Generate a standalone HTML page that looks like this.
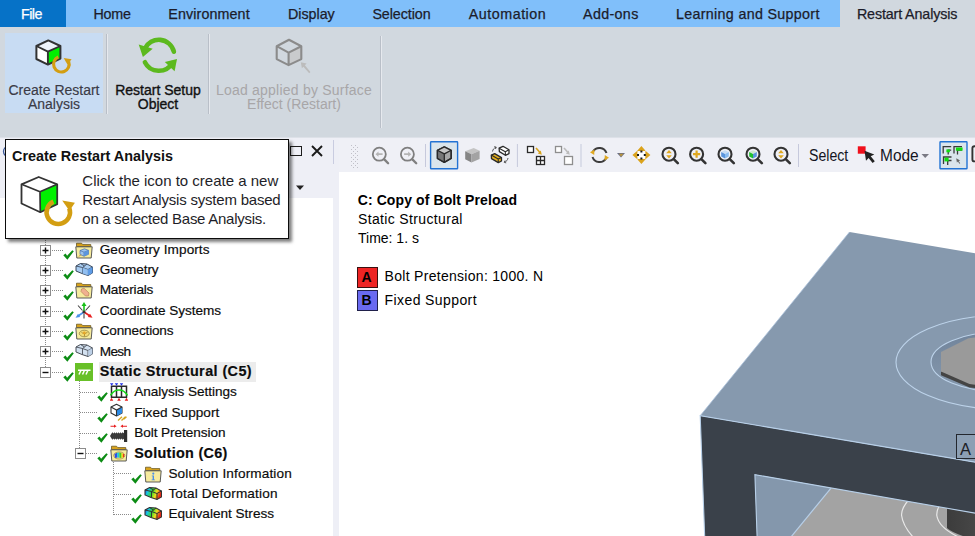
<!DOCTYPE html>
<html>
<head>
<meta charset="utf-8">
<title>Mechanical - Restart Analysis</title>
<style>
html,body{margin:0;padding:0;}
body{width:975px;height:536px;overflow:hidden;position:relative;background:#eeeff6;font-family:"Liberation Sans",sans-serif;color:#1a1a1a;}
.abs{position:absolute;}
.t{position:absolute;white-space:nowrap;line-height:1;}
/* tab bar */
#tabbar{left:0;top:0;width:975px;height:27px;background:#80bffa;}
#filetab{left:0;top:0;width:66px;height:27px;background:#0672c7;}
#acttab{left:840px;top:0;width:135px;height:27px;background:#d1d8df;}
.tab{font-size:14.3px;top:7px;color:#1c1c2a;letter-spacing:0.17px;-webkit-text-stroke:0.25px #1c1c2a;}
/* ribbon */
#ribbon{left:0;top:27px;width:975px;height:110px;background:#d1d8df;}
#ribbonline{left:0;top:137px;width:975px;height:1px;background:#dde1e8;}
.rb{font-size:14px;color:#1a1a1a;text-align:center;}
.vsep{position:absolute;width:1px;background:#b9bfc8;}
.vsepw{position:absolute;width:1px;background:#e6e9ee;}
/* tree */
.tr{font-family:"Liberation Sans",sans-serif;font-size:13.6px;color:#0c0c0c;letter-spacing:0.1px;-webkit-text-stroke:0.18px #0c0c0c;}
.vp{font-size:14px;color:#000;}
</style>
</head>
<body>

<!-- ======= TAB BAR ======= -->
<div id="tabbar" class="abs"></div>
<div id="filetab" class="abs"></div>
<div id="acttab" class="abs"></div>
<div class="t tab" style="left:21px;color:#fff;-webkit-text-stroke:0.25px #fff;letter-spacing:-0.55px;">File</div>
<div class="t tab" style="left:93.5px;letter-spacing:-0.21px;">Home</div>
<div class="t tab" style="left:168.3px;letter-spacing:0.11px;">Environment</div>
<div class="t tab" style="left:288px;letter-spacing:-0.03px;">Display</div>
<div class="t tab" style="left:372.4px;letter-spacing:-0.07px;">Selection</div>
<div class="t tab" style="left:468.8px;letter-spacing:0.51px;">Automation</div>
<div class="t tab" style="left:583px;letter-spacing:0.34px;">Add-ons</div>
<div class="t tab" style="left:676px;letter-spacing:0.31px;">Learning and Support</div>
<div class="t tab" style="left:856.9px;letter-spacing:-0.13px;">Restart Analysis</div>

<!-- ======= RIBBON ======= -->
<div id="ribbon" class="abs"></div>
<div id="ribbonline" class="abs"></div>
<div class="abs" style="left:5px;top:33px;width:98px;height:80px;background:#c8dcf3;"></div>
<div class="vsep" style="left:106px;top:34px;height:80px;"></div><div class="vsepw" style="left:107px;top:34px;height:80px;"></div>
<div class="vsep" style="left:208px;top:34px;height:80px;"></div><div class="vsepw" style="left:209px;top:34px;height:80px;"></div>
<div class="vsep" style="left:380px;top:36px;height:92px;"></div><div class="vsepw" style="left:381px;top:36px;height:92px;"></div>

<div class="t rb" style="left:5px;width:98px;top:83.4px;color:#3b3b46;-webkit-text-stroke:0.15px #3b3b46;">Create Restart</div>
<div class="t rb" style="left:5px;width:98px;top:97.4px;color:#3b3b46;-webkit-text-stroke:0.15px #3b3b46;">Analysis</div>
<div class="t rb" style="left:108px;width:100px;top:83.4px;color:#111;-webkit-text-stroke:0.35px #111;">Restart Setup</div>
<div class="t rb" style="left:108px;width:100px;top:97.4px;color:#111;-webkit-text-stroke:0.35px #111;">Object</div>
<div class="t rb" style="left:210px;width:168px;top:83.4px;color:#a8a6a8;letter-spacing:0.22px;">Load applied by Surface</div>
<div class="t rb" style="left:210px;width:168px;top:97.4px;color:#a8a6a8;">Effect (Restart)</div>

<!-- ribbon icons -->
<svg class="abs" style="left:25px;top:32px;" width="60" height="50" viewBox="0 0 60 50">
  <path d="M23.3 8.400 L35.400 14 L35.400 26.600 L22.900 32.600 L11.400 27 L11.400 14 Z" fill="#fff"/>
  <path d="M23.3 8.400 L35.400 14 L22.900 19.600 L11.400 14 Z" fill="#eef3fa"/>
  <path d="M22.900 19.600 L35.400 14 L35.400 26.600 L22.900 32.600 Z" fill="#00f000"/>
  <path d="M11.400 14 L22.900 19.600 L35.400 14 M22.900 19.600 L22.900 32.600" fill="none" stroke="#333" stroke-width="1.900" stroke-linejoin="round"/>
  <path d="M23.3 8.400 L35.400 14 L35.400 26.600 L22.900 32.600 L11.400 27 L11.400 14 Z" fill="none" stroke="#333" stroke-width="2" stroke-linejoin="round"/>
  <path d="M33.350 25 A7.800 7.800 0 1 0 43.700 29.500" fill="none" stroke="#d39e12" stroke-width="3.100"/>
  <path d="M38.700 26.100 L46.600 27.200 L42.400 32.600 Z" fill="#d39e12"/>
</svg>
<svg class="abs" style="left:128px;top:32px;" width="60" height="50" viewBox="0 0 60 50">
  <path d="M45.900 19.700 A15.500 15.500 0 0 0 16.750 16.750" fill="none" stroke="#5cb91e" stroke-width="4.600" stroke-linecap="round"/>
  <path d="M10.700 12.600 L24.700 16.800 L14.900 25 Z" fill="#5cb91e"/>
  <path d="M16.900 30.200 A15.500 15.500 0 0 0 44.200 31.050" fill="none" stroke="#5cb91e" stroke-width="4.600" stroke-linecap="round"/>
  <path d="M36.800 29.900 L49 27.100 L46.600 39.200 Z" fill="#5cb91e"/>
</svg>
<svg class="abs" style="left:265px;top:30px;" width="60" height="50" viewBox="265 30 60 50">
  <path d="M288.600 52.600 L301.300 46.200 L301.300 59.100 L288.600 65.100 Z" fill="#c9cbcd"/>
  <path d="M289 39.700 L301.300 46.200 L301.300 59.100 L288.600 65.100 L276.700 59.100 L276.700 46.200 Z M276.700 46.200 L288.600 52.600 L301.300 46.200 M288.600 52.600 L288.600 65.100" fill="none" stroke="#8b8b8b" stroke-width="2.100" stroke-linejoin="round"/>
  <path d="M300.800 62.300 L306.600 63.600 L304.900 65.300 L310.400 72 L309.200 73.200 L303.400 66.700 L301.900 68.200 Z" fill="#bcbcbc"/>
</svg>

<!-- ======= LEFT PANEL ======= -->
<div class="abs" style="left:0;top:139px;width:339px;height:397px;background:#eeeff6;"></div>
<div class="abs" style="left:0;top:198px;width:333px;height:338px;background:#fff;"></div>
<!-- panel header icons -->
<div class="abs" style="left:290px;top:145.8px;width:9.8px;height:8.6px;border:1.6px solid #1c1c1c;box-sizing:content-box;"></div>
<svg class="abs" style="left:310px;top:143.7px;" width="14" height="14" viewBox="0 0 14 14"><path d="M2 2 L12 12 M12 2 L2 12" stroke="#1a1a1a" stroke-width="1.9" fill="none"/></svg>
<div class="abs" style="left:333px;top:140px;width:1px;height:24px;background:#c9cce0;"></div>
<svg class="abs" style="left:294px;top:184px;" width="12" height="8" viewBox="0 0 12 8"><path d="M2 1.5 L10 1.5 L6 6 Z" fill="#222"/></svg>

<!--TREE-->
<svg class="abs" style="left:0;top:0;" width="340" height="536" viewBox="0 0 340 536" shape-rendering="crispEdges"><g stroke="#8a8a8a" stroke-width="1" stroke-dasharray="1 1" fill="none"><path d="M45.5 238 L45.5 366.7"/><path d="M79.5 380.7 L79.5 448.1"/><path d="M113.5 462.1 L113.5 514.6"/><path d="M52 250.5 L63 250.5"/><path d="M52 270.5 L63 270.5"/><path d="M52 290.5 L63 290.5"/><path d="M52 311.5 L63 311.5"/><path d="M52 331.5 L63 331.5"/><path d="M52 351.5 L63 351.5"/><path d="M52 372.5 L63 372.5"/><path d="M79.5 392.5 L97 392.5"/><path d="M79.5 412.5 L97 412.5"/><path d="M79.5 433.5 L97 433.5"/><path d="M86 453.5 L97 453.5"/><path d="M113.5 473.5 L131 473.5"/><path d="M113.5 494.5 L131 494.5"/><path d="M113.5 514.5 L131 514.5"/></g></svg>
<svg class="abs" style="left:40px;top:245px;" width="11" height="11" viewBox="0 0 11 11"><rect x="0.5" y="0.5" width="10" height="10" fill="#fff" stroke="#8c8c8c"/><path d="M2.5 5.5 L8.5 5.5 M5.5 2.5 L5.5 8.5" stroke="#111" stroke-width="1.400"/></svg>
<svg class="abs" style="left:63.2px;top:249.9px;" width="11" height="10" viewBox="0 0 11 10"><path d="M0.300 5.300 L2.600 3.500 L4.100 5.800 L9.300 0.200 L10.800 1.200 L4.400 9.800 Z" fill="#0c8c14"/></svg>
<svg class="abs" style="left:74.6px;top:240.6px;" width="18" height="18" viewBox="0 0 18 18"><path d="M1.5 5.5 L1.5 2.2 L6.5 2.2 L7.8 3.6 L15.8 3.6 L15.8 5.5 Z" fill="#d9a31c" stroke="#5a4a1a" stroke-width="0.7"/>
<path d="M0.8 5.8 L17.2 5.8 L16.2 17 L1.8 17 Z" fill="#f6eb9e" stroke="#4a4a4a" stroke-width="0.9"/><path d="M5 9.5 L9.5 7.8 L13.5 9.3 L13.5 13.3 L9 15.2 L5 13.6 Z" fill="#9cc3ee" stroke="#4a6fa8" stroke-width="0.7"/><path d="M5 9.5 L9 11.2 L13.5 9.3 M9 11.2 L9 15.2" stroke="#4a6fa8" stroke-width="0.7" fill="none"/><path d="M9 11.2 L13.5 9.3 L13.5 13.3 L9 15.2Z" fill="#5b95dd"/><path d="M4 15.5 L6 13.5" stroke="#c58a1a" stroke-width="1"/></svg>
<div class="t tr" style="left:99.7px;top:242.7px;letter-spacing:0.07px;">Geometry Imports</div>
<svg class="abs" style="left:40px;top:265px;" width="11" height="11" viewBox="0 0 11 11"><rect x="0.5" y="0.5" width="10" height="10" fill="#fff" stroke="#8c8c8c"/><path d="M2.5 5.5 L8.5 5.5 M5.5 2.5 L5.5 8.5" stroke="#111" stroke-width="1.400"/></svg>
<svg class="abs" style="left:63.2px;top:270.2px;" width="11" height="10" viewBox="0 0 11 10"><path d="M0.300 5.300 L2.600 3.500 L4.100 5.800 L9.300 0.200 L10.800 1.200 L4.400 9.800 Z" fill="#0c8c14"/></svg>
<svg class="abs" style="left:74.6px;top:260.9px;" width="18" height="18" viewBox="0 0 18 18"><path d="M1 5 L5.5 2.5 L12 3 L17.5 6 L17.5 12 L13 14.5 L7 12.5 L1 10 Z" fill="#a9cdf2" stroke="#3d4a5c" stroke-width="1"/>
<path d="M7.5 6.5 L13 8.5 L17.5 6 M13 8.5 L13 14.5 M1 5 L7.5 6.5 L7.5 12.5 M5.5 2.500 L9.500 5 M7.5 6.5 L12 3" stroke="#3d4a5c" stroke-width="0.9" fill="none"/>
<path d="M13 8.5 L17.5 6 L17.5 12 L13 14.5 Z" fill="#5d9be6"/><path d="M7.5 6.5 L13 8.5 L13 14.5 L7.5 12.5Z" fill="#8bbcf0" opacity="0.8"/></svg>
<div class="t tr" style="left:99.7px;top:263.1px;letter-spacing:-0.11px;">Geometry</div>
<svg class="abs" style="left:40px;top:285px;" width="11" height="11" viewBox="0 0 11 11"><rect x="0.5" y="0.5" width="10" height="10" fill="#fff" stroke="#8c8c8c"/><path d="M2.5 5.5 L8.5 5.5 M5.5 2.5 L5.5 8.5" stroke="#111" stroke-width="1.400"/></svg>
<svg class="abs" style="left:63.2px;top:290.6px;" width="11" height="10" viewBox="0 0 11 10"><path d="M0.300 5.300 L2.600 3.500 L4.100 5.800 L9.300 0.200 L10.800 1.200 L4.400 9.800 Z" fill="#0c8c14"/></svg>
<svg class="abs" style="left:74.6px;top:281.3px;" width="18" height="18" viewBox="0 0 18 18"><path d="M1.5 5.5 L1.5 2.2 L6.5 2.2 L7.8 3.6 L15.8 3.6 L15.8 5.5 Z" fill="#d9a31c" stroke="#5a4a1a" stroke-width="0.7"/>
<path d="M0.8 5.8 L17.2 5.8 L16.2 17 L1.8 17 Z" fill="#f6eb9e" stroke="#4a4a4a" stroke-width="0.9"/><path d="M6.5 8 L9 7.2 L14 12 L13.5 15 L10.5 15 L6 10.5 Z" fill="#f0b090" stroke="#b07a50" stroke-width="0.6"/></svg>
<div class="t tr" style="left:99.7px;top:283.4px;letter-spacing:-0.18px;">Materials</div>
<svg class="abs" style="left:40px;top:306px;" width="11" height="11" viewBox="0 0 11 11"><rect x="0.5" y="0.5" width="10" height="10" fill="#fff" stroke="#8c8c8c"/><path d="M2.5 5.5 L8.5 5.5 M5.5 2.5 L5.5 8.5" stroke="#111" stroke-width="1.400"/></svg>
<svg class="abs" style="left:63.2px;top:310.9px;" width="11" height="10" viewBox="0 0 11 10"><path d="M0.300 5.300 L2.600 3.500 L4.100 5.800 L9.300 0.200 L10.800 1.200 L4.400 9.800 Z" fill="#0c8c14"/></svg>
<svg class="abs" style="left:74.6px;top:301.6px;" width="18" height="18" viewBox="0 0 18 18"><path d="M9 10 L9 2" stroke="#18c018" stroke-width="1.6"/><path d="M9 0 L11.5 4 L6.5 4 Z" fill="#18c018"/>
<path d="M9 10 L15 14" stroke="#e82020" stroke-width="1.6"/><path d="M17.5 15.8 L12.8 15 L15 11.8 Z" fill="#e82020"/>
<path d="M9 10 L3 14" stroke="#4a90e8" stroke-width="1.6"/><path d="M0.5 15.8 L5.200 15 L3 11.800 Z" fill="#4a90e8"/>
<path d="M3 3.500 L7.5 8.500 M15 3.500 L10.5 8.500 M9 12 L9 16.500" stroke="#444" stroke-width="1.1"/><circle cx="9" cy="10" r="1.6" fill="#333"/></svg>
<div class="t tr" style="left:99.7px;top:303.8px;letter-spacing:-0.06px;">Coordinate Systems</div>
<svg class="abs" style="left:40px;top:326px;" width="11" height="11" viewBox="0 0 11 11"><rect x="0.5" y="0.5" width="10" height="10" fill="#fff" stroke="#8c8c8c"/><path d="M2.5 5.5 L8.5 5.5 M5.5 2.5 L5.5 8.5" stroke="#111" stroke-width="1.400"/></svg>
<svg class="abs" style="left:63.2px;top:331.3px;" width="11" height="10" viewBox="0 0 11 10"><path d="M0.300 5.300 L2.600 3.500 L4.100 5.800 L9.300 0.200 L10.800 1.200 L4.400 9.800 Z" fill="#0c8c14"/></svg>
<svg class="abs" style="left:74.6px;top:322.0px;" width="18" height="18" viewBox="0 0 18 18"><path d="M1.5 5.5 L1.5 2.2 L6.5 2.2 L7.8 3.6 L15.8 3.6 L15.8 5.5 Z" fill="#d9a31c" stroke="#5a4a1a" stroke-width="0.7"/>
<path d="M0.8 5.8 L17.2 5.8 L16.2 17 L1.8 17 Z" fill="#f6eb9e" stroke="#4a4a4a" stroke-width="0.9"/><ellipse cx="9.3" cy="11.5" rx="5" ry="3.3" fill="#f3dc78" stroke="#8a7a3a" stroke-width="0.7"/><path d="M6.5 10.5 L9.5 12 L12.5 10.200 M9.500 12 L9.500 14.5" stroke="#a08030" stroke-width="0.8" fill="none"/><circle cx="9.300" cy="11" r="1.400" fill="#e7a628"/></svg>
<div class="t tr" style="left:99.7px;top:324.1px;letter-spacing:-0.17px;">Connections</div>
<svg class="abs" style="left:40px;top:346px;" width="11" height="11" viewBox="0 0 11 11"><rect x="0.5" y="0.5" width="10" height="10" fill="#fff" stroke="#8c8c8c"/><path d="M2.5 5.5 L8.5 5.5 M5.5 2.5 L5.5 8.5" stroke="#111" stroke-width="1.400"/></svg>
<svg class="abs" style="left:63.2px;top:351.7px;" width="11" height="10" viewBox="0 0 11 10"><path d="M0.300 5.300 L2.600 3.500 L4.100 5.800 L9.300 0.200 L10.800 1.200 L4.400 9.800 Z" fill="#0c8c14"/></svg>
<svg class="abs" style="left:74.6px;top:342.4px;" width="18" height="18" viewBox="0 0 18 18"><path d="M1 5 L5.5 2.5 L12 3 L17.5 6 L17.5 12 L13 14.5 L7 12.5 L1 10 Z" fill="#d3e1f0" stroke="#4a4f58" stroke-width="1"/>
<path d="M7.5 6.5 L13 8.5 L17.5 6 M13 8.5 L13 14.5 M1 5 L7.5 6.5 L7.5 12.5 M5.5 2.500 L9.500 5 M7.5 6.5 L12 3" stroke="#4a4f58" stroke-width="0.9" fill="none"/>
<path d="M13 8.5 L17.5 6 L17.5 12 L13 14.5 Z" fill="#b8cce4" opacity="0.8"/></svg>
<div class="t tr" style="left:99.7px;top:344.5px;letter-spacing:-0.6px;">Mesh</div>
<div class="abs" style="left:98.5px;top:361.7px;width:157px;height:20px;background:#ececec;"></div>
<svg class="abs" style="left:40px;top:367px;" width="11" height="11" viewBox="0 0 11 11"><rect x="0.5" y="0.5" width="10" height="10" fill="#fff" stroke="#8c8c8c"/><path d="M2.500 5.500 L8.500 5.500" stroke="#111" stroke-width="1.400"/></svg>
<svg class="abs" style="left:63.2px;top:372.0px;" width="11" height="10" viewBox="0 0 11 10"><path d="M0.300 5.300 L2.600 3.500 L4.100 5.800 L9.300 0.200 L10.800 1.200 L4.400 9.800 Z" fill="#0c8c14"/></svg>
<svg class="abs" style="left:74.6px;top:362.7px;" width="18" height="18" viewBox="0 0 18 18"><rect x="0" y="0" width="18" height="18" fill="#68c028"/><path d="M3 7.300 L15.500 7.300 M6 7.300 L4 11.500 M9.500 7.300 L7.500 11.500 M13 7.300 L11 11.500" stroke="#fff" stroke-width="1.5" fill="none"/></svg>
<div class="t tr" style="left:99.7px;top:364.3px;font-weight:bold;font-size:14.4px;letter-spacing:0.42px;">Static Structural (C5)</div>
<svg class="abs" style="left:97.2px;top:392.4px;" width="11" height="10" viewBox="0 0 11 10"><path d="M0.300 5.300 L2.600 3.500 L4.100 5.800 L9.300 0.200 L10.800 1.200 L4.400 9.800 Z" fill="#0c8c14"/></svg>
<svg class="abs" style="left:109.6px;top:383.1px;" width="18" height="18" viewBox="0 0 18 18"><path d="M1.500 3.200 L16.500 3.200 L16.500 14.300 L1.500 14.300 Z M6.500 3.200 L6.500 14.300 M11.500 3.200 L11.500 14.300" stroke="#2a2a2a" stroke-width="1.500" fill="none"/>
<path d="M0.500 12.500 C4.500 5 13.500 5 17.500 12.500" stroke="#18d818" stroke-width="1.500" fill="none"/>
<path d="M0 0.200 L3.400 0.200 L1.700 2.800Z M4.800 0.200 L8.200 0.200 L6.500 2.800Z M9.800 0.200 L13.200 0.200 L11.500 2.800Z" fill="#2030e8"/>
<path d="M-0.300 17.800 L3.300 17.800 L1.500 14.800Z M7.200 17.800 L10.800 17.800 L9 14.800Z M14.700 17.800 L18.300 17.800 L16.500 14.800Z" fill="#e82020"/></svg>
<div class="t tr" style="left:134.2px;top:385.2px;letter-spacing:-0.06px;">Analysis Settings</div>
<svg class="abs" style="left:97.2px;top:412.7px;" width="11" height="10" viewBox="0 0 11 10"><path d="M0.300 5.300 L2.600 3.500 L4.100 5.800 L9.300 0.200 L10.800 1.200 L4.400 9.800 Z" fill="#0c8c14"/></svg>
<svg class="abs" style="left:109.6px;top:403.4px;" width="18" height="18" viewBox="0 0 18 18"><path d="M1 4 L6.500 1.200 L12 4 L12 10 L6.500 13 L1 10 Z" fill="#fff" stroke="#333" stroke-width="1.100" stroke-linejoin="round"/><path d="M6.500 7 L12 4 L12 10 L6.500 13 Z" fill="#2a8be8"/>
<path d="M1 4 L6.500 7 L12 4 M6.500 7 L6.500 13" stroke="#333" stroke-width="1.100" fill="none"/>
<path d="M8 17.500 L12 13.800 M11.500 17.500 L15.500 13.800 M14 16 L16.500 13.800" stroke="#d4a520" stroke-width="1.3"/></svg>
<div class="t tr" style="left:134.2px;top:405.5px;letter-spacing:0.04px;">Fixed Support</div>
<svg class="abs" style="left:97.2px;top:433.1px;" width="11" height="10" viewBox="0 0 11 10"><path d="M0.300 5.300 L2.600 3.500 L4.100 5.800 L9.300 0.200 L10.800 1.200 L4.400 9.800 Z" fill="#0c8c14"/></svg>
<svg class="abs" style="left:109.6px;top:423.8px;" width="18" height="18" viewBox="0 0 18 18"><path d="M0.500 2.200 L5 2.200 M12 2.200 L17 2.200" stroke="#e82020" stroke-width="1.100"/><path d="M6.600 2.200 L4 0.600 L4 3.800Z M10.400 2.200 L13 0.600 L13 3.800Z" fill="#e82020"/>
<rect x="14" y="6" width="3.200" height="12" fill="#2d2d2d"/><path d="M0 12 L1.500 9.500 L2.500 8.300 L3.500 9.600 L4.500 8.300 L5.500 9.600 L6.500 8.300 L7.500 9.600 L8.500 8.300 L9.500 9.600 L10.500 8.300 L11.500 9.600 L12.500 8.300 L14 9.300 L14 14.800 L12.500 15.800 L11.500 14.500 L10.500 15.800 L9.500 14.500 L8.500 15.800 L7.500 14.500 L6.500 15.800 L5.500 14.500 L4.500 15.800 L3.500 14.500 L2.500 15.800 L1.500 14.500 Z" fill="#3a3a3a"/></svg>
<div class="t tr" style="left:134.2px;top:425.9px;letter-spacing:-0.06px;">Bolt Pretension</div>
<svg class="abs" style="left:74.5px;top:448px;" width="11" height="11" viewBox="0 0 11 11"><rect x="0.5" y="0.5" width="10" height="10" fill="#fff" stroke="#8c8c8c"/><path d="M2.500 5.500 L8.500 5.500" stroke="#111" stroke-width="1.400"/></svg>
<svg class="abs" style="left:97.2px;top:453.4px;" width="11" height="10" viewBox="0 0 11 10"><path d="M0.300 5.300 L2.600 3.500 L4.100 5.800 L9.300 0.200 L10.800 1.200 L4.400 9.800 Z" fill="#0c8c14"/></svg>
<svg class="abs" style="left:109.6px;top:444.1px;" width="18" height="18" viewBox="0 0 18 18"><path d="M1.5 5.5 L1.5 2.2 L6.5 2.2 L7.8 3.6 L15.8 3.6 L15.8 5.5 Z" fill="#d9a31c" stroke="#5a4a1a" stroke-width="0.7"/>
<path d="M0.8 5.8 L17.2 5.8 L16.2 17 L1.8 17 Z" fill="#f6eb9e" stroke="#4a4a4a" stroke-width="0.9"/><ellipse cx="9.200" cy="11.500" rx="5.600" ry="3.600" fill="#f0e08a" stroke="#8a7a3a" stroke-width="0.600"/>
<path d="M4.500 10 L7 8.800 L7.500 13.500 L5 14 Z" fill="#2a50e8"/><path d="M7 8.800 L9.300 8.600 L9.600 13.800 L7.500 13.500Z" fill="#20c8d8"/><path d="M9.300 8.600 L11.500 9 L11.500 14 L9.600 13.800Z" fill="#40d020"/><path d="M11.500 9 L13 9.600 L13 13.500 L11.500 14Z" fill="#f0d020"/><path d="M13 9.600 L14.300 10.500 L14 13 L13 13.500Z" fill="#e83020"/></svg>
<div class="t tr" style="left:134.2px;top:445.7px;font-weight:bold;font-size:14.4px;letter-spacing:0.3px;">Solution (C6)</div>
<svg class="abs" style="left:131.2px;top:473.8px;" width="11" height="10" viewBox="0 0 11 10"><path d="M0.300 5.300 L2.600 3.500 L4.100 5.800 L9.300 0.200 L10.800 1.200 L4.400 9.800 Z" fill="#0c8c14"/></svg>
<svg class="abs" style="left:143.5px;top:464.5px;" width="18" height="18" viewBox="0 0 18 18"><path d="M1.5 5.5 L1.5 2.2 L6.5 2.2 L7.8 3.6 L15.8 3.6 L15.8 5.5 Z" fill="#d9a31c" stroke="#5a4a1a" stroke-width="0.7"/>
<path d="M0.8 5.8 L17.2 5.8 L16.2 17 L1.8 17 Z" fill="#f6eb9e" stroke="#4a4a4a" stroke-width="0.9"/><circle cx="9.300" cy="8.600" r="1.100" fill="#4a90e8"/><path d="M7.800 10.500 L10 10.500 L10 14.500 L11 14.500 L11 15.300 L7.600 15.300 L7.600 14.500 L8.600 14.500 L8.600 11.300 L7.800 11.300 Z" fill="#4a90e8"/></svg>
<div class="t tr" style="left:168.4px;top:466.6px;letter-spacing:0.13px;">Solution Information</div>
<svg class="abs" style="left:131.2px;top:494.1px;" width="11" height="10" viewBox="0 0 11 10"><path d="M0.300 5.300 L2.600 3.500 L4.100 5.800 L9.300 0.200 L10.800 1.200 L4.400 9.800 Z" fill="#0c8c14"/></svg>
<svg class="abs" style="left:143.5px;top:484.8px;" width="18" height="18" viewBox="0 0 18 18"><defs><linearGradient id="rg1" x1="0" y1="0" x2="1" y2="0.300"><stop offset="0" stop-color="#2838e0"/><stop offset="0.250" stop-color="#18c8e0"/><stop offset="0.500" stop-color="#30d828"/><stop offset="0.750" stop-color="#f0e020"/><stop offset="1" stop-color="#e82818"/></linearGradient></defs>
<path d="M1 5 L5.5 2.5 L12 3 L17.5 6 L17.5 12 L13 14.5 L7 12.5 L1 10 Z" fill="url(#rg1)" stroke="#333" stroke-width="1.100"/>
<path d="M7.5 6.5 L13 8.5 L17.5 6 M13 8.5 L13 14.5 M1 5 L7.5 6.5 L7.5 12.5 M5.5 2.500 L9.500 5 M7.5 6.5 L12 3" stroke="#333" stroke-width="1" fill="none"/></svg>
<div class="t tr" style="left:168.4px;top:486.9px;letter-spacing:0.16px;">Total Deformation</div>
<svg class="abs" style="left:131.2px;top:514.4px;" width="11" height="10" viewBox="0 0 11 10"><path d="M0.300 5.300 L2.600 3.500 L4.100 5.800 L9.300 0.200 L10.800 1.200 L4.400 9.800 Z" fill="#0c8c14"/></svg>
<svg class="abs" style="left:143.5px;top:505.1px;" width="18" height="18" viewBox="0 0 18 18"><defs><linearGradient id="rg2" x1="0" y1="0" x2="1" y2="0.300"><stop offset="0" stop-color="#2838e0"/><stop offset="0.250" stop-color="#18c8e0"/><stop offset="0.500" stop-color="#30d828"/><stop offset="0.750" stop-color="#f0e020"/><stop offset="1" stop-color="#e82818"/></linearGradient></defs>
<path d="M1 5 L5.5 2.5 L12 3 L17.5 6 L17.5 12 L13 14.5 L7 12.5 L1 10 Z" fill="url(#rg2)" stroke="#333" stroke-width="1.100"/>
<path d="M7.5 6.5 L13 8.5 L17.5 6 M13 8.5 L13 14.5 M1 5 L7.5 6.5 L7.5 12.5 M5.5 2.500 L9.500 5 M7.5 6.5 L12 3" stroke="#333" stroke-width="1" fill="none"/></svg>
<div class="t tr" style="left:168.4px;top:507.2px;letter-spacing:-0.01px;">Equivalent Stress</div>
<!--/TREE-->

<!-- ======= TOOLBAR ======= -->
<div class="abs" style="left:339px;top:139px;width:636px;height:33px;background:#eff0f6;"></div>
<!--TB-->
<svg class="abs" style="left:0;top:0;" width="975" height="175" viewBox="0 0 975 175"><g fill="#c0c0c8"><rect x="351" y="145" width="1" height="1"/><rect x="355" y="145" width="1" height="1"/><rect x="353" y="147" width="1" height="1"/><rect x="357" y="147" width="1" height="1"/><rect x="351" y="149" width="1" height="1"/><rect x="355" y="149" width="1" height="1"/><rect x="353" y="151" width="1" height="1"/><rect x="357" y="151" width="1" height="1"/><rect x="351" y="153" width="1" height="1"/><rect x="355" y="153" width="1" height="1"/><rect x="353" y="155" width="1" height="1"/><rect x="357" y="155" width="1" height="1"/><rect x="351" y="157" width="1" height="1"/><rect x="355" y="157" width="1" height="1"/><rect x="353" y="159" width="1" height="1"/><rect x="357" y="159" width="1" height="1"/><rect x="351" y="161" width="1" height="1"/><rect x="355" y="161" width="1" height="1"/><rect x="353" y="163" width="1" height="1"/><rect x="357" y="163" width="1" height="1"/><rect x="351" y="165" width="1" height="1"/><rect x="355" y="165" width="1" height="1"/><rect x="353" y="167" width="1" height="1"/><rect x="357" y="167" width="1" height="1"/></g><g transform="translate(379.3 154.2)"><circle cx="0" cy="0" r="6.500" fill="none" stroke="#7f7f7f" stroke-width="1.8"/><path d="M5 5.200 L8.800 9" stroke="#7f7f7f" stroke-width="2.3" stroke-linecap="round"/><path d="M-3.800 0 L-0.800 -2.600 L-0.800 -0.900 L3.300 -0.900 L3.300 0.900 L-0.800 0.900 L-0.800 2.600Z" fill="#b4b4b4"/></g><g transform="translate(407.4 154.2)"><circle cx="0" cy="0" r="6.500" fill="none" stroke="#7f7f7f" stroke-width="1.8"/><path d="M5 5.200 L8.800 9" stroke="#7f7f7f" stroke-width="2.3" stroke-linecap="round"/><path d="M3.800 0 L0.800 -2.600 L0.800 -0.900 L-3.300 -0.900 L-3.300 0.900 L0.800 0.900 L0.800 2.600Z" fill="#b4b4b4"/></g><rect x="425.0" y="144" width="1" height="23" fill="#c6c9dc"/><rect x="430.6" y="141.800" width="27" height="27" rx="0.600" fill="#dae5ec" stroke="#2273d3" stroke-width="1.400"/><g transform="translate(444.3 154.6) scale(0.86)"><path d="M-8 -5 L0 -9 L8 -5 L8 4.500 L0 9 L-8 4.500 Z" fill="#a6a6a6" stroke="#333" stroke-width="1.600" stroke-linejoin="round"/><path d="M-8 -5 L0 -9 L8 -5 L0 -0.800 Z" fill="#c6c6c6"/><path d="M-8 -5 L0 -0.800 L0 9 L-8 4.500Z" fill="#777"/><path d="M-8 -5 L0 -0.800 L8 -5 M0 -0.800 L0 9" fill="none" stroke="#2a2a2a" stroke-width="1.500"/><path d="M-8 -5 L0 -9 L8 -5 L8 4.500 L0 9 L-8 4.500 Z" fill="none" stroke="#2a2a2a" stroke-width="1.600" stroke-linejoin="round"/></g><g transform="translate(472.4 155.3) scale(0.9)"><path d="M-8 -4.500 L1.500 -8 L8 -5 L-1 -1.200 Z" fill="#c4c4c4"/><path d="M-8 -4.500 L-1 -1.200 L-1 8 L-8 4.500Z" fill="#858585"/><path d="M-1 -1.200 L8 -5 L8 4 L-1 8Z" fill="#a3a3a3"/></g><g stroke-linejoin="round"><path d="M499.100 148.200 L503 146.300 L509 149.700 L509 153.600 L505.400 155.300 L499.400 151.600 Z" fill="#fff" stroke="#2a2a2a" stroke-width="1.300"/><path d="M499.100 148.200 L505.300 151.700 L509 149.700 M505.300 151.700 L505.400 155.300" fill="none" stroke="#2a2a2a" stroke-width="1.100"/><path d="M491.300 155.100 L494.700 153.600 L501.500 157.600 L501.500 161 L498.300 162.600 L491.500 158.600 Z" fill="#e3ad1c" stroke="#2a2a2a" stroke-width="1.300"/><path d="M491.300 155.100 L498.200 159 L501.500 157.600 M498.200 159 L498.300 162.600" fill="none" stroke="#2a2a2a" stroke-width="1.100"/><path d="M492.500 151.500 C492.800 149.500 494 148 496 147.300 M494.300 146.600 L496.300 147.200 L495.400 149" fill="none" stroke="#555" stroke-width="1"/><path d="M508 158 C507.700 160 506.500 161.500 504.500 162.200 M506.200 162.900 L504.200 162.300 L505.100 160.500" fill="none" stroke="#555" stroke-width="1"/></g><rect x="516.9" y="144" width="1" height="23" fill="#c6c9dc"/><g transform="translate(536 155)"><rect x="-8.500" y="-8.500" width="6" height="6" fill="#fff" stroke="#2a2a2a" stroke-width="1.300"/><rect x="0.500" y="1.500" width="8" height="8" fill="#fff" stroke="#2a2a2a" stroke-width="1.300"/><path d="M4.500 1.500 L4.500 9.500 M0.500 5.500 L8.500 5.500" stroke="#2a2a2a" stroke-width="1.300"/><path d="M0 -7 L4 -2.500" stroke="#d9a31c" stroke-width="1.600"/><path d="M5.800 -0.200 L1.800 -1.600 L4.800 -4.400Z" fill="#d9a31c"/></g><g transform="translate(564 155)"><rect x="-8.500" y="-8.500" width="6" height="6" fill="#fff" stroke="#8e8e8e" stroke-width="1.300"/><rect x="0.500" y="1.500" width="8" height="8" fill="#fff" stroke="#8e8e8e" stroke-width="1.300"/><path d="M0 -7 L4 -2.500" stroke="#bcbcbc" stroke-width="1.600"/><path d="M5.800 -0.200 L1.800 -1.600 L4.800 -4.400Z" fill="#bcbcbc"/></g><rect x="580.5" y="144" width="1" height="23" fill="#c6c9dc"/><g transform="translate(599.5 155)"><path d="M-6.500 -3.500 A7.500 7.500 0 0 1 7 -2" fill="none" stroke="#3c3c3c" stroke-width="2"/><path d="M6.500 3.500 A7.500 7.500 0 0 1 -7 2" fill="none" stroke="#3c3c3c" stroke-width="2"/><path d="M-9.500 -2.800 L-5 -5.500 L-5.300 0Z" fill="#e0a820"/><path d="M9.500 2.800 L5 5.500 L5.300 0Z" fill="#e0a820"/></g><path d="M617 153 L625 153 L621 157.500Z" fill="#6a6f86"/><path d="M619 153.800 L623.500 153.800 L621 156.800Z" fill="#d9a31c" opacity="0.700"/><g transform="translate(641.4 155)"><path d="M0 -9 L4.600 -3.800 L-4.600 -3.800Z M0 9 L4.600 3.800 L-4.600 3.800Z M-9 0 L-3.800 -4.600 L-3.800 4.600Z M9 0 L3.800 -4.600 L3.800 4.600Z" fill="#dba31c"/><rect x="-3.800" y="-3.800" width="7.600" height="7.600" fill="#fff"/><path d="M-1 -4.400 h2 v2 h-2z M-1 2.400 h2 v2 h-2z M-4.400 -1 h2 v2 h-2z M2.400 -1 h2 v2 h-2z" fill="#1c1c1c"/></g><g transform="translate(669 154.2)"><circle cx="0" cy="0" r="6.500" fill="none" stroke="#333" stroke-width="2.1"/><path d="M5 5.200 L8.800 9" stroke="#333" stroke-width="2.6" stroke-linecap="round"/><path d="M0 -4.300 L2.800 -1 L-2.800 -1Z M0 4.300 L2.800 1 L-2.800 1Z" fill="#e0a820"/></g><g transform="translate(696.6 154.2)"><circle cx="0" cy="0" r="6.500" fill="none" stroke="#333" stroke-width="2.1"/><path d="M5 5.200 L8.800 9" stroke="#333" stroke-width="2.6" stroke-linecap="round"/><path d="M-3.600 0 L3.600 0 M0 -3.600 L0 3.600" stroke="#e0a820" stroke-width="2.200"/></g><g transform="translate(725 154.2)"><circle cx="0" cy="0" r="6.500" fill="none" stroke="#333" stroke-width="2.1"/><path d="M5 5.200 L8.800 9" stroke="#333" stroke-width="2.6" stroke-linecap="round"/><path d="M-3.800 -2.200 L0 -4 L3.800 -2.200 L0 -0.300Z" fill="#c8ddf4"/><path d="M-3.800 -2.200 L0 -0.300 L0 4.200 L-3.800 2.200Z" fill="#5b95dd"/><path d="M3.800 -2.200 L0 -0.300 L0 4.200 L3.800 2.200Z" fill="#8bbcf0"/></g><g transform="translate(753 154.2)"><circle cx="0" cy="0" r="6.500" fill="none" stroke="#333" stroke-width="2.1"/><path d="M5 5.200 L8.800 9" stroke="#333" stroke-width="2.6" stroke-linecap="round"/><path d="M-3.800 -2.200 L0 -4 L3.800 -2.200 L0 -0.300Z" fill="#d0e8d0"/><path d="M-3.800 -2.200 L0 -0.300 L0 4.200 L-3.800 2.200Z" fill="#20c030"/><path d="M3.800 -2.200 L0 -0.300 L0 4.200 L3.800 2.200Z" fill="#5b95dd"/></g><g transform="translate(781 154.2)"><circle cx="0" cy="0" r="6.500" fill="none" stroke="#333" stroke-width="2.1"/><path d="M5 5.200 L8.800 9" stroke="#333" stroke-width="2.6" stroke-linecap="round"/><path d="M0 -4.300 L2.800 -1 L-2.800 -1Z M0 4.300 L2.800 1 L-2.800 1Z" fill="#e0a820"/></g><rect x="798.0" y="144" width="1" height="23" fill="#c6c9dc"/><rect x="857.8" y="146.3" width="7.800" height="7.400" fill="#f0101c"/><path d="M864.500 150.800 L874.300 154.600 L870.700 156.200 L874.800 161.300 L872.600 163 L868.600 157.900 L866 160.800 Z" fill="#222"/><path d="M921.500 154 L929 154 L925.200 158Z" fill="#7a7a84"/><rect x="940" y="141.800" width="27" height="27" rx="0.600" fill="#dae5ec" stroke="#2273d3" stroke-width="1.400"/><path d="M943.2 153.6 L943.2 146.6 L951.2 146.6" stroke="#3a3a3a" stroke-width="1.300" fill="none"/><path d="M948.2 154.6 L948.2 150.1 L951.2 150.1" stroke="#3a3a3a" stroke-width="1.300" fill="none"/><rect x="946.4" y="149.4" width="3.5" height="2.9" fill="#10e010"/><path d="M954 153.6 L954 146.6 L962 146.6" stroke="#3a3a3a" stroke-width="1.300" fill="none"/><path d="M957.5 154.6 L957.5 150.1 L962 150.1" stroke="#3a3a3a" stroke-width="1.300" fill="none"/><rect x="955.9" y="147.5" width="6.7" height="3.2" fill="#10e010"/><path d="M943.5 164 L943.5 157 L951.5 157" stroke="#3a3a3a" stroke-width="1.300" fill="none"/><path d="M947.7 165 L947.7 160.5 L951.5 160.5" stroke="#3a3a3a" stroke-width="1.300" fill="none"/><rect x="944.5" y="157.6" width="4.1" height="3.8" fill="#10e010"/><path d="M956.200 158.300 L960.200 160.400 L958.700 160.900 L960.200 163.200 L959.300 163.700 L958 161.500 L956.900 162.600Z" fill="#666"/><path d="M976 146.200 L974.500 146.200 Q972.400 146.200 972.400 148.200 L972.400 159.400 Q972.400 161.400 974.500 161.400 L976 161.400" stroke="#333" stroke-width="1.900" fill="none"/></svg>
<div class="t" style="left:808.7px;top:148.1px;font-size:15.6px;color:#15151f;transform:scaleX(0.906);transform-origin:0 0;">Select</div>
<div class="t" style="left:880.3px;top:148.1px;font-size:15.6px;color:#15151f;transform:scaleX(0.992);transform-origin:0 0;">Mode</div>
<!--/TB-->

<!-- ======= VIEWPORT ======= -->
<div class="abs" style="left:339px;top:172px;width:636px;height:364px;background:#fff;"></div>
<div class="t vp" style="left:357.7px;top:193px;font-weight:bold;letter-spacing:0.1px;">C: Copy of Bolt Preload</div>
<div class="t vp" style="left:358px;top:212.1px;letter-spacing:0.35px;">Static Structural</div>
<div class="t vp" style="left:358px;top:231.1px;">Time: 1. s</div>
<div class="abs" style="left:357px;top:267px;width:18.5px;height:18.5px;background:#ee2424;border:1px solid #3a1010;"></div>
<div class="t vp" style="left:361.5px;top:270.3px;font-weight:bold;">A</div>
<div class="t vp" style="left:384.6px;top:269.4px;letter-spacing:0.29px;">Bolt Pretension: 1000. N</div>
<div class="abs" style="left:357px;top:290px;width:18.5px;height:18.5px;background:#6a6af0;border:1px solid #20204a;"></div>
<div class="t vp" style="left:361.5px;top:293.3px;font-weight:bold;">B</div>
<div class="t vp" style="left:384.6px;top:293.3px;letter-spacing:0.4px;">Fixed Support</div>

<svg class="abs" style="left:339px;top:172px;" width="636" height="364" viewBox="339 172 636 364">
  <defs>
    <linearGradient id="cyl" x1="0" y1="0" x2="1" y2="0"><stop offset="0" stop-color="#3c3c3c"/><stop offset="1" stop-color="#484848"/></linearGradient>
    <linearGradient id="hole" x1="0" y1="0" x2="0" y2="1"><stop offset="0" stop-color="#71849b"/><stop offset="1" stop-color="#8699ae"/></linearGradient>
  </defs>
  <!-- front face (dark) -->
  <path d="M700.2 415.7 L980 463 L980 540 L704.8 540 Z" fill="#3a414a"/>
  <clipPath id="opening"><path d="M754.9 474.6 L980 514 L980 540 L757.2 540 Z"/></clipPath>
  <g clip-path="url(#opening)">
    <rect x="750" y="470" width="230" height="70" fill="#a3a3a3"/>
    <path d="M750 470 L830.8 488.3 L788.5 540 L750 540 Z" fill="#8497ac"/>
    <path d="M830.8 488.3 L788.5 540" stroke="#b7cfe8" stroke-width="1.2" fill="none"/>
    <path d="M912 496 C904.500 504 901 510 901.600 515.500 C902.500 523 906.500 530 914 538" stroke="#e8e8e8" stroke-width="1.200" fill="none"/>
    <path d="M941 503 C937.500 508 936.500 511.500 936.800 515.500 C938 523.500 946 531 958.500 537" stroke="#e8e8e8" stroke-width="1.200" fill="none"/>
    <path d="M947 500 L980 500 L980 540 L975 540 C962 536 951 532 947 528 Z" fill="url(#cyl)"/>
  </g>
  <path d="M757.2 540 L754.9 474.6 L980 514" stroke="#b7cfe8" stroke-width="1.100" fill="none"/>
  <!-- top face -->
  <path d="M849.5 232 L980 254.2 L980 463 L700.2 415.7 Z" fill="#8699ae"/>
  <path d="M704.8 540 L700.2 415.7 L980 463" stroke="#b7cfe8" stroke-width="1.1" fill="none"/>
  <path d="M700.2 415.7 L849.5 232" stroke="#a9c0da" stroke-width="0.8" fill="none"/>
  <!-- circles on top -->
  <ellipse cx="1006" cy="362.2" rx="110" ry="47.2" fill="none" stroke="#bdd3ea" stroke-width="1.1"/>
  <ellipse cx="1002" cy="361.9" rx="71" ry="30" fill="url(#hole)" stroke="#bdd3ea" stroke-width="1.1"/>
  <!-- hex bolt head -->
  <path d="M941 371.3 L941 375.3 L969.500 387.500 L980 388.500 L980 384 Z" fill="#444"/>
  <path d="M941 352 L968.500 338.200 L980 336.800 L980 385.300 L969.500 384 L941 371.600 Z" fill="#9a9a9a"/>
  <!-- label A -->
  <rect x="956.5" y="434.5" width="30" height="24" fill="#8c9fb4" stroke="#23272e" stroke-width="1"/>
  <text x="960" y="454.500" font-family="Liberation Sans, sans-serif" font-size="16.5" fill="#1c2026">A</text>
</svg>

<svg class="abs" style="left:0;top:140px;" width="6" height="24" viewBox="0 140 6 24"><circle cx="9" cy="151.500" r="5.500" fill="#f4f6fb" stroke="#3d5a9a" stroke-width="1.300"/></svg>
<!-- ======= TOOLTIP ======= -->
<div class="abs" style="left:5.1px;top:139px;width:282px;height:97.5px;background:#fff;border:1.4px solid #0c0c0c;box-shadow:3px 3px 3px rgba(0,0,0,0.5);"></div>
<div class="t" style="left:12px;top:148.8px;font-size:14.4px;font-weight:bold;color:#111;">Create Restart Analysis</div>
<div class="t" style="left:82.3px;top:172.9px;font-size:15px;color:#1e1e28;">Click the icon to create a new</div>
<div class="t" style="left:82.3px;top:191.7px;font-size:15px;color:#1e1e28;letter-spacing:-0.21px;">Restart Analysis system based</div>
<div class="t" style="left:82.3px;top:210.5px;font-size:15px;color:#1e1e28;letter-spacing:-0.26px;">on a selected Base Analysis.</div>
<svg class="abs" style="left:10px;top:165px;" width="80" height="70" viewBox="0 0 80 70">
  <path d="M28.700 12 L47.200 19.300 L47.200 39.200 L30.300 47.200 L11.500 38.500 L11.500 19.300 Z" fill="#fff"/>
  <path d="M30 26.800 L47.200 19.300 L47.200 39.200 L30.300 47.200 Z" fill="#00f000"/>
  <path d="M11.500 19.300 L30 26.800 L47.200 19.300 M30 26.800 L30.300 47.200" fill="none" stroke="#333" stroke-width="1.700" stroke-linejoin="round"/>
  <path d="M28.700 12 L47.200 19.300 L47.200 39.200 L30.300 47.200 L11.500 38.500 L11.500 19.300 Z" fill="none" stroke="#333" stroke-width="1.800" stroke-linejoin="round"/>
  <path d="M43.450 36.650 A11.700 11.700 0 1 0 59.300 43.300" fill="none" stroke="#d39e12" stroke-width="4.600"/>
  <path d="M52.200 35.500 L64.900 37.800 L59.400 45.800 Z" fill="#d39e12"/>
</svg>

</body>
</html>
